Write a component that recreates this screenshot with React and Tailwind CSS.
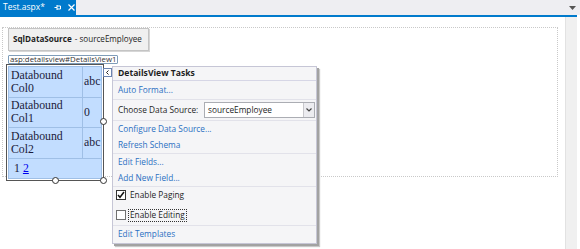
import React from "react";

function Handle({ className }) {
  return (
    <span
      className={
        "absolute w-[7px] h-[7px] rounded-full bg-white border border-[#333] " +
        className
      }
    />
  );
}

function Sep() {
  return <div className="h-px bg-[#e2e2ea]" />;
}

function TaskLink({ children, h = "h-[16px]" }) {
  return (
    <div className={h + " flex items-center pl-[5px] text-[#2a6fc2]"}>
      {children}
    </div>
  );
}

export default function App() {
  return (
    <div className="w-[580px] h-[249px] bg-white overflow-hidden flex flex-col font-['Open_Sans',sans-serif] text-[8.3px] leading-none text-[#1e1e1e]">
      {/* tab strip */}
      <div className="h-[15px] bg-[#eeeef2] flex items-stretch shrink-0">
        <div className="w-[76px] bg-[#007acc] text-white flex items-center pl-[3px]">
          <span className="text-[8.5px]">Test.aspx*</span>
          <svg className="ml-[9px]" width="8" height="7" viewBox="0 0 8 7">
            <path d="M0.5 3.5h2.5M3 1v5M3 2h3.5v3H3" stroke="#fff" strokeWidth="1" fill="none" />
          </svg>
          <svg className="ml-[6px]" width="7" height="7" viewBox="0 0 7 7">
            <path d="M0.5 0.5l6 6M6.5 0.5l-6 6" stroke="#fff" strokeWidth="1.2" />
          </svg>
        </div>
        <div className="flex-1" />
        <div className="w-[16px] flex items-center justify-center">
          <svg width="7" height="4" viewBox="0 0 7 4">
            <path d="M0 0h7L3.5 4z" fill="#555" />
          </svg>
        </div>
      </div>
      <div className="h-[2px] w-[577px] bg-[#007acc] shrink-0" />

      {/* body */}
      <div className="flex-1 flex">
        <div className="flex-1 relative pt-[10px] pl-[2px]">
          {/* form container */}
          <div className="w-[556px] h-[150px] border border-dotted border-[#c9c9c9] pl-[5px]">
            <div className="w-[141px] h-[23px] bg-[#f0f0f0] border border-[#c4c4c4] shadow-[1px_1px_0_#d6d6d6] flex items-center pl-[4px] text-[8.1px] whitespace-nowrap">
              <span className="font-bold">SqlDataSource</span>
              <span className="ml-[3px]">- sourceEmployee</span>
            </div>
            <div className="mt-[4px] w-fit h-[9px] border border-[#7f9db9] rounded-[1px] bg-white flex items-center px-[1px] text-[7.8px] text-[#333] whitespace-nowrap">
              asp:detailsview#DetailsView1
            </div>

            {/* details view */}
            <div className="relative -ml-[2px] w-[98px] h-[117px] border border-[#555] p-px bg-white">
              <div className="h-full bg-[#c2ddff] border border-[#9fbfe6] font-['Liberation_Serif',serif] text-[11.8px] leading-[13px] text-[#1b1b3a] flex flex-col">
                {["Col0", "Col1", "Col2"].map((c, i) => (
                  <div key={c} className="h-[30.5px] flex border-b border-[#9fbfe6]">
                    <div className="w-[74px] border-r border-[#9fbfe6] flex flex-col justify-center pl-[2px]">
                      <span>Databound</span>
                      <span>{c}</span>
                    </div>
                    <div className="flex-1 flex items-center pl-[1px]">
                      {i === 1 ? "0" : "abc"}
                    </div>
                  </div>
                ))}
                <div className="flex-1 flex items-center pl-[5px]">
                  <span>1</span>
                  <span className="ml-[3px] text-[#0000ee] underline">2</span>
                </div>
              </div>
              <Handle className="-right-[4px] top-[53px]" />
              <Handle className="left-[45px] -bottom-[4px]" />
              <Handle className="-right-[4px] -bottom-[4px]" />
              <div className="absolute left-[96px] top-[3px] w-[9px] h-[9px] border border-[#6b84b0] bg-white flex items-center justify-center">
                <svg width="5" height="5" viewBox="0 0 5 5">
                  <path d="M3.5 0.5L1.5 2.5L3.5 4.5" stroke="#222" strokeWidth="1" fill="none" />
                </svg>
              </div>
            </div>
          </div>

          {/* smart tag panel */}
          <div className="absolute left-[112px] top-[49px] w-[205px] h-[178px] bg-[#f5f5f7] border border-[#c6c6d6] shadow-[2px_2px_0_#a2a2a2,3px_3px_1px_#c8c8c8] flex flex-col">
            <div className="h-[13px] flex items-center pl-[5px] font-bold text-[8.6px]">
              DetailsView Tasks
            </div>
            <div className="h-px bg-[#d6d6e6]" />
            <TaskLink h="h-[18px]">Auto Format...</TaskLink>
            <Sep />
            <div className="h-[20px] flex items-center pl-[5px]">
              <span className="w-[86px]">Choose Data Source:</span>
              <div className="w-[111px] h-[16px] bg-white border border-[#abadb3] flex items-center">
                <span className="flex-1 pl-[3px]">sourceEmployee</span>
                <div className="w-[11px] h-full bg-[#ececf0] border-l border-[#c8c8cc] flex items-center justify-center">
                  <svg width="6" height="4" viewBox="0 0 6 4">
                    <path d="M0.5 0.5L3 3L5.5 0.5" stroke="#444" strokeWidth="1.2" fill="none" />
                  </svg>
                </div>
              </div>
            </div>
            <Sep />
            <TaskLink>Configure Data Source...</TaskLink>
            <TaskLink>Refresh Schema</TaskLink>
            <Sep />
            <TaskLink>Edit Fields...</TaskLink>
            <TaskLink>Add New Field...</TaskLink>
            <Sep />
            <div className="h-[38px] flex flex-col justify-center gap-[9px] pl-[3px]">
              <div className="flex items-center">
                <span className="w-[10px] h-[10px] border border-[#333] bg-white flex items-center justify-center">
                  <svg width="8" height="8" viewBox="0 0 8 8">
                    <path d="M1 4l2 2.3L7 1" stroke="#111" strokeWidth="1.5" fill="none" />
                  </svg>
                </span>
                <span className="ml-[4px]">Enable Paging</span>
              </div>
              <div className="flex items-center">
                <span className="w-[10px] h-[10px] border border-[#707070] bg-white" />
                <span className="ml-[2px] px-[1px] py-[1px] border border-dotted border-[#333]">
                  Enable Editing
                </span>
              </div>
            </div>
            <Sep />
            <TaskLink h="h-[17px]">Edit Templates</TaskLink>
          </div>
        </div>

        {/* scrollbar */}
        <div className="w-[12px] bg-[#f0f0f0] border-l border-[#e2e2e2]" />
        <div className="w-[3px]" />
      </div>
    </div>
  );
}
